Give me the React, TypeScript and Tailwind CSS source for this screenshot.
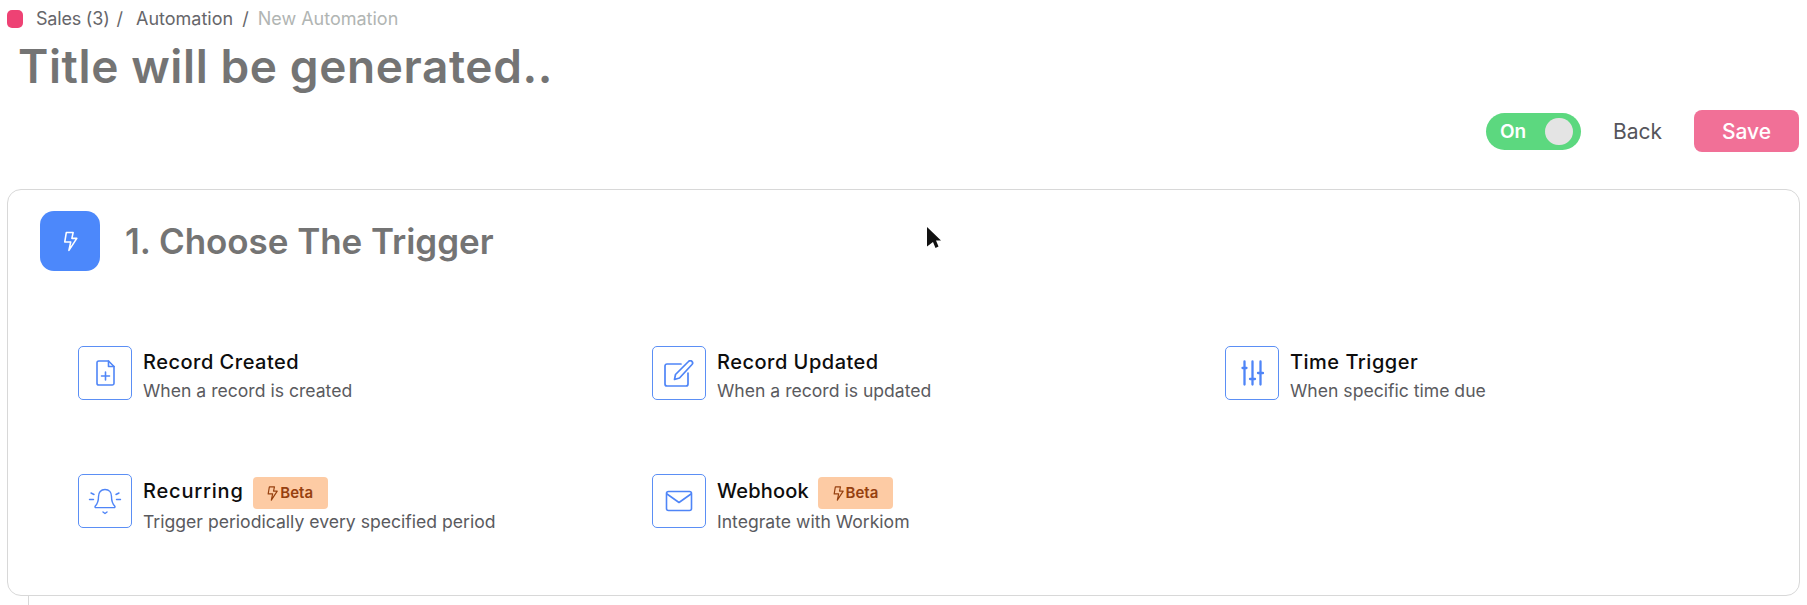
import { ReactNode } from "react";

function Bolt({ className }: { className: string }) {
  return (
    <svg className={className} viewBox="0 0 14 20" fill="none" stroke="currentColor" strokeWidth={1.5} strokeLinejoin="round" strokeLinecap="round">
      <path d="M3 1.5h6.5L8.3 7H13L5.500 18.500 7.200 10.500H1.500z" />
    </svg>
  );
}

function Tile({ children }: { children: ReactNode }) {
  return (
    <div className="flex h-[54px] w-[54px] shrink-0 items-center justify-center rounded-[5px] border border-[#5b8ff5] text-[#4f85f7]">
      {children}
    </div>
  );
}

function BetaTag() {
  return (
    <span className="ml-[9px] flex h-8 w-[75px] translate-y-[2px] items-center justify-center gap-[2px] rounded-[4px] bg-[#fdcba4] text-[15px] font-semibold text-[#96400f]">
      <Bolt className="h-[17px] w-[11px]" />
      Beta
    </span>
  );
}

function Trigger({ icon, title, sub, beta, low, tracking = "tracking-[0.5px]" }: { icon: ReactNode; title: string; sub: string; beta?: boolean; low?: boolean; tracking?: string }) {
  return (
    <div className="flex items-start gap-[11px]">
      <Tile>{icon}</Tile>
      <div className={low ? "flex flex-col gap-[7px] pt-[5px]" : "flex flex-col gap-[5px] pt-[4px]"}>
        <div className="flex h-[24px] items-center">
          <span className={`text-[20px] leading-6 font-medium ${tracking} text-[#0d0d0d]`}>{title}</span>
          {beta && <BetaTag />}
        </div>
        <span className="text-[17.6px] leading-6 text-[#5a5a5e]">{sub}</span>
      </div>
    </div>
  );
}

const svgProps = {
  fill: "none",
  stroke: "currentColor",
  strokeLinecap: "round" as const,
  strokeLinejoin: "round" as const,
};

export default function App() {
  return (
    <div className="relative h-[605px] w-[1807px] overflow-hidden bg-white font-['Inter',sans-serif]">
      {/* Breadcrumb */}
      <div className="flex h-[37px] items-center pl-[7px] text-[18px] text-[#66666a]">
        <span className="h-[18px] w-[16px] rounded-[5px] bg-[#ee4274]" />
        <span className="ml-[13px] tracking-[-0.2px]">Sales (3)</span>
        <span className="ml-[7px]">/</span>
        <span className="ml-[13px]">Automation</span>
        <span className="ml-[9px]">/</span>
        <span className="ml-[9px] text-[#b1b5b3]">New Automation</span>
      </div>

      <h1 className="mt-[8px] ml-[18px] h-[48px] text-[46px] leading-[42px] font-semibold tracking-[0.6px] text-[#747474]">Title will be generated..</h1>

      {/* Actions */}
      <div className="mt-[17px] mr-[8px] flex h-[42px] items-center justify-end">
        <div className="flex h-[37px] w-[95px] items-center justify-between rounded-full bg-[#5cd87f] pr-2 pl-[14px]">
          <span className="pt-[2px] text-[19px] font-semibold text-white">On</span>
          <span className="h-[27px] w-[28px] rounded-full bg-[#e4e4e4]" />
        </div>
        <span className="ml-[32px] pt-[1px] text-[21px] text-[#55555b]">Back</span>
        <button className="ml-[32px] h-[42px] w-[105px] rounded-[8px] bg-[#f17097] pt-[1px] text-[21px] font-medium text-white">Save</button>
      </div>

      {/* Trigger card */}
      <div className="mx-[7px] mt-[37px] h-[407px] rounded-[14px] border border-[#d8d8d8] pt-[21px] pl-[32px]">
        <div className="flex items-center">
          <div className="flex h-[60px] w-[60px] items-center justify-center rounded-[14px] bg-[#4c88fb] text-white">
            <Bolt className="h-[21px] w-[15px]" />
          </div>
          <h2 className="ml-[25px] pt-[1px] text-[35px] font-semibold tracking-[-0.05px] text-[#747474]">1. Choose The Trigger</h2>
        </div>
        <div className="mt-[75px] ml-[38px] grid grid-cols-[574px_573px_1fr] gap-y-[71px]">
          <Trigger
            title="Record Created"
            sub="When a record is created"
            icon={
              <svg className="h-[26px] w-[19px]" viewBox="0 0 19 26" strokeWidth={1.6} {...svgProps}>
                <path d="M12.500 1H2.800A1.800 1.800 0 0 0 1 2.800v20.400A1.800 1.800 0 0 0 2.800 25h13.400a1.800 1.800 0 0 0 1.800-1.800V6.500z" />
                <path d="M12.500 1v5.500H18M9.500 12v8M5.500 16h8" />
              </svg>
            }
          />
          <Trigger
            title="Record Updated"
            sub="When a record is updated"
            icon={
              <svg className="h-[27px] w-[30px]" viewBox="0 0 30 27" strokeWidth={1.7} {...svgProps}>
                <path d="M17 4H3a2 2 0 0 0-2 2v18a2 2 0 0 0 2 2h19a2 2 0 0 0 2-2V13" />
                <path d="M24.500 1.500a2.200 2.200 0 0 1 3.500 3L15.500 18l-5 1.500 1-5z" />
              </svg>
            }
          />
          <Trigger
            title="Time Trigger"
            sub="When specific time due"
            icon={
              <svg className="h-[26px] w-[23px]" viewBox="0 0 23 26" strokeWidth={2.300} {...svgProps}>
                <path d="M3.500 1.500v23M11.500 1.500v23M19.500 1.500v23" />
                <path d="M1.500 8h4M9 19h5M17 13h5" />
              </svg>
            }
          />
          <Trigger
            low
            beta
            tracking="tracking-[0.8px]"
            title="Recurring"
            sub="Trigger periodically every specified period"
            icon={
              <svg className="h-[34px] w-[34px]" viewBox="0 0 34 34" strokeWidth={1.4} {...svgProps}>
                <path d="M17 5.500c-4.200 0-6.500 3-6.500 7 0 5-1.200 7.500-3.200 9.500-.7.800-.2 1.600.7 1.600h18c.9 0 1.400-.8.7-1.600-2-2-3.200-4.500-3.200-9.500 0-4-2.300-7-6.500-7z" />
                <path d="M15 28l2 1.500 2-1.500M3 9l3 1.500M31 9l-3 1.500M1.500 15.500h4M32.500 15.500h-4" />
              </svg>
            }
          />
          <Trigger
            low
            beta
            tracking="tracking-[0.2px]"
            title="Webhook"
            sub="Integrate with Workiom"
            icon={
              <svg className="h-[28px] w-[28px]" viewBox="0 0 28 28" strokeWidth={1.6} {...svgProps}>
                <rect x="1.500" y="4.500" width="25" height="19" rx="2" />
                <path d="M2 7l12 8.500L26 7" />
              </svg>
            }
          />
        </div>
      </div>

      {/* Line running on below the card */}
      <div className="ml-[28px] h-[9px] w-px bg-[#d8d8d8]" />

      {/* Mouse cursor caught in the screenshot */}
      <svg className="absolute top-[227px] left-[927px] h-[23px] w-[15px]" viewBox="0 0 15 23" fill="#111111">
        <path d="M0 0l14 13.500H9l2.500 6-3 1.500-2.500-6-6 4.500z" />
      </svg>
    </div>
  );
}
